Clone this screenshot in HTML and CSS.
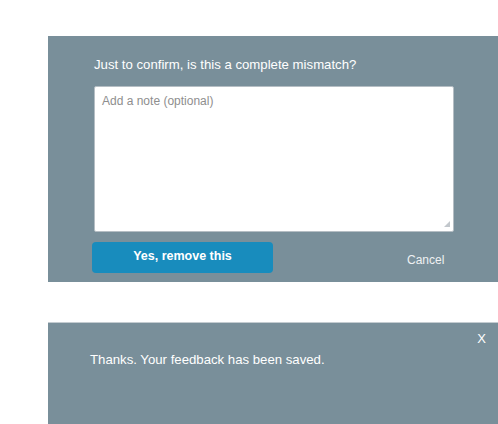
FILE: index.html
```html
<!DOCTYPE html>
<html>
<head>
<meta charset="utf-8">
<link rel="stylesheet" href="styles.css">
</head>
<body>
<div class="confirm">
  <div class="question">Just to confirm, is this a complete mismatch?</div>
  <div class="note-wrap">
    <textarea class="note" placeholder="Add a note (optional)"></textarea>
    <span class="grip"></span>
  </div>
  <div class="actions">
    <button class="remove">Yes, remove this</button>
    <span class="cancel">Cancel</span>
  </div>
</div>
<div class="saved">
  <span class="close">X</span>
  <div class="thanks">Thanks. Your feedback has been saved.</div>
</div>
</body>
</html>
```
FILE: styles.css
```css
html, body {
  margin: 0;
  padding: 0;
  background: #fff;
  font-family: "Liberation Sans", Arial, sans-serif;
}
body {
  overflow: hidden;
  width: 498px;
  height: 424px;
}
.confirm {
  margin: 36px 0 0 48px;
  width: 450px;
  height: 246px;
  box-sizing: border-box;
  background: #798f9a;
  padding: 21px 45px 0 44px;
}
.question {
  color: #fff;
  font-size: 13.2px;
  line-height: 15px;
  margin-left: 2px;
}
.note-wrap {
  position: relative;
  margin: 14px 0 0 2px;
  width: 360px;
  height: 146px;
}
.note {
  display: block;
  box-sizing: border-box;
  width: 360px;
  height: 146px;
  border: 1px solid #b5bec4;
  border-radius: 2px;
  background: #fff;
  padding: 7px 7px;
  resize: none;
  font-family: "Liberation Sans", Arial, sans-serif;
  font-size: 12px;
  color: #333;
}
.note::placeholder {
  color: #8e8e8e;
}
.grip {
  position: absolute;
  right: 4px;
  bottom: 5px;
  width: 0;
  height: 0;
  border-left: 6px solid transparent;
  border-bottom: 6px solid #c2c7cc;
}
.actions {
  display: flex;
  align-items: center;
  margin-top: 10px;
}
.remove {
  width: 181px;
  height: 31px;
  border: none;
  border-radius: 4px;
  background: #188cbd;
  color: #fff;
  font-family: "Liberation Sans", Arial, sans-serif;
  font-weight: bold;
  font-size: 12.5px;
  padding: 0 0 3px 0;
  margin: 0;
}
.cancel {
  margin-left: 134px;
  margin-top: 4px;
  color: #eef1f3;
  font-size: 12px;
}
.saved {
  position: relative;
  margin: 40px 0 0 48px;
  width: 450px;
  height: 102px;
  box-sizing: border-box;
  background: #798f9a;
  border-top: 1px solid #c4ccd1;
  padding: 29px 0 0 42px;
}
.close {
  position: absolute;
  right: 12px;
  top: 8px;
  color: #fff;
  font-size: 13px;
}
.thanks {
  color: #fff;
  font-size: 13.2px;
  line-height: 15px;
}
```
